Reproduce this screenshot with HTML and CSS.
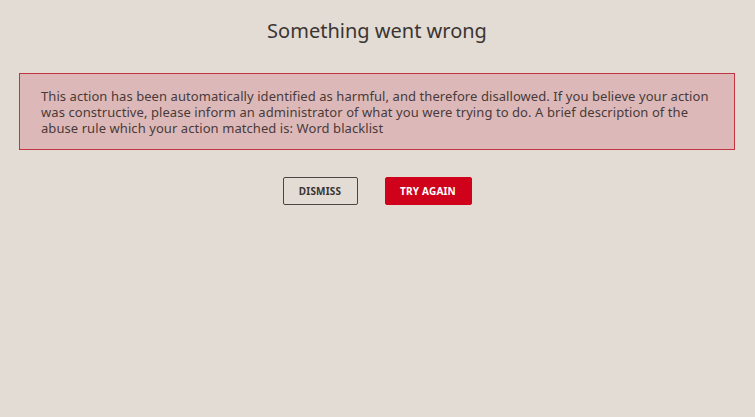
FILE: index.html
```html
<!DOCTYPE html>
<html>
<head>
<meta charset="utf-8">
<link rel="stylesheet" href="styles.css">
</head>
<body>
<main class="page">
  <h1 class="title">Something went wrong</h1>
  <div class="error-box">
    <p class="error-text">This action has been automatically identified as harmful, and therefore disallowed. If you believe your action was constructive, please inform an administrator of what you were trying to do. A brief description of the abuse rule which your action matched is: Word blacklist</p>
  </div>
  <div class="actions">
    <button class="btn btn-outline">DISMISS</button>
    <button class="btn btn-primary">TRY AGAIN</button>
  </div>
</main>
</body>
</html>
```

FILE: styles.css
```css
html, body {
  margin: 0;
  padding: 0;
  background: #e3dcd5;
  height: 100%;
}
.page {
  font-family: "Noto Sans", "Open Sans", sans-serif;
  color: #3f3a38;
  padding: 17px 20px 0 19px;
  display: flex;
  flex-direction: column;
}
.title {
  margin: 0;
  text-align: center;
  font-size: 20px;
  font-weight: 400;
  line-height: 28px;
  color: #3a3532;
}
.error-box {
  margin-top: 28px;
  background: #dcb9b8;
  border: 1px solid #c43340;
  padding: 14px 21px 13px 21px;
}
.error-text {
  margin: 0;
  font-size: 13px;
  line-height: 16px;
  letter-spacing: 0.07px;
  color: #4a3a3a;
}
.actions {
  margin-top: 27px;
  display: flex;
  justify-content: center;
  gap: 27px;
}
.btn {
  font-family: "Noto Sans", sans-serif;
  font-size: 10px;
  font-weight: 700;
  height: 28px;
  border-radius: 2px;
  padding: 0;
  cursor: pointer;
  letter-spacing: 0.2px;
}
.btn-outline {
  width: 75px;
  background: transparent;
  border: 1px solid #4a4542;
  color: #3a3532;
}
.btn-primary {
  width: 87px;
  background: #d0021b;
  border: 1px solid #d0021b;
  color: #ffffff;
}
```
